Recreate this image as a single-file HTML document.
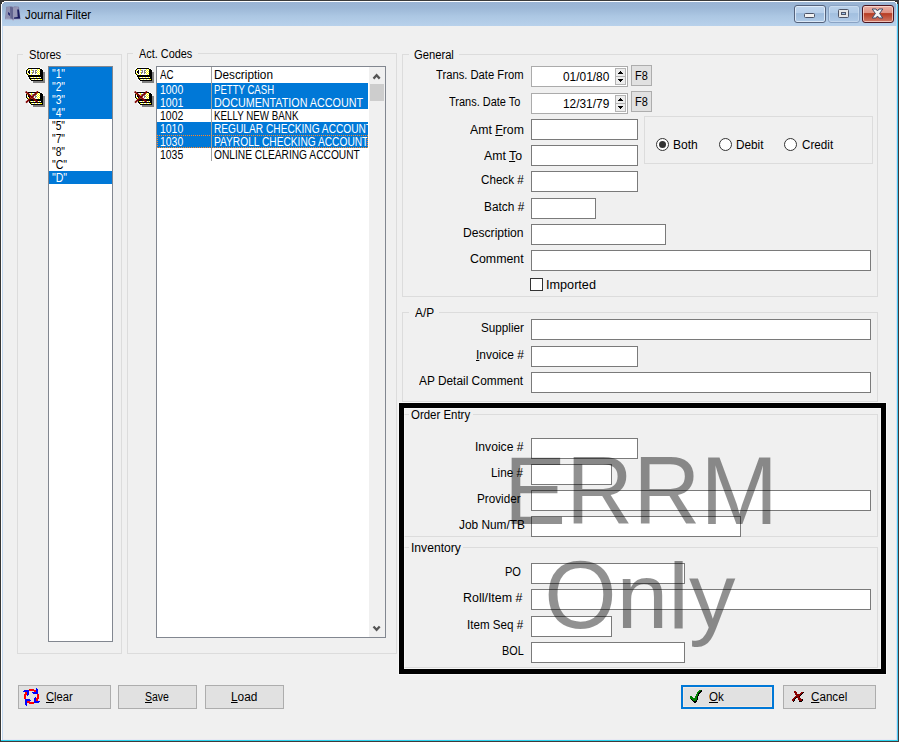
<!DOCTYPE html><html><head><meta charset="utf-8"><title>Journal Filter</title><style>
*{box-sizing:border-box;margin:0;padding:0}
html,body{width:899px;height:742px;overflow:hidden;background:#f0f0f0}
body{position:relative;font-family:"Liberation Sans",sans-serif;font-size:12px;color:#000;line-height:14px}
.a{position:absolute}
.t{position:absolute;white-space:nowrap;height:14px;line-height:14px;transform-origin:0 0}
.gb{position:absolute;border:1px solid #dcdcdc}
.gl{position:absolute;background:#f0f0f0;height:3px}
.in{position:absolute;background:#fff;border:1px solid #7a7a7a;height:21px}
.in2{position:absolute;background:#fff;border:1px solid #ababab;height:21px}
.btn{position:absolute;background:#e1e1e1;border:1px solid #adadad;height:24px}
.sel{position:absolute;background:#0078d7}
u{text-decoration:underline;text-underline-offset:1px}
</style></head><body>
<div class="a" style="left:0;top:0;width:899px;height:26px;background:linear-gradient(#98b2d2 0%,#9cb7d6 30%,#acc7e3 62%,#b8d1eb 100%)"></div>
<div class="a" style="left:0;top:0;width:899px;height:1px;background:#3a3a3a"></div>
<div class="a" style="left:1px;top:1px;width:896px;height:1px;background:#fdfeff"></div>
<div class="a" style="left:0;top:0;width:1px;height:742px;background:#363636"></div>
<div class="a" style="left:1px;top:2px;width:1px;height:738px;background:#ffffff"></div>
<div class="a" style="left:2px;top:26px;width:1px;height:714px;background:#c3d8ef"></div>
<div class="a" style="left:896px;top:26px;width:1px;height:714px;background:#d6e0f4"></div>
<div class="a" style="left:896px;top:2px;width:1px;height:24px;background:#c3dcf4"></div>
<div class="a" style="left:897px;top:2px;width:1px;height:739px;background:#4ccbf3"></div>
<div class="a" style="left:898px;top:0;width:1px;height:742px;background:#3d3a3c"></div>
<div class="a" style="left:3px;top:739px;width:893px;height:1px;background:#e9e9f2"></div>
<div class="a" style="left:1px;top:740px;width:897px;height:1px;background:#2cd3ee"></div>
<div class="a" style="left:0;top:741px;width:899px;height:1px;background:#403a3a"></div>
<div class="a" style="left:1px;top:1px;width:1px;height:1px;background:#343434"></div><div class="a" style="left:2px;top:1px;width:1px;height:1px;background:#343434"></div><div class="a" style="left:3px;top:1px;width:1px;height:1px;background:#343434"></div><div class="a" style="left:1px;top:2px;width:1px;height:1px;background:#343434"></div><div class="a" style="left:2px;top:2px;width:1px;height:1px;background:#ffffff"></div><div class="a" style="left:3px;top:2px;width:1px;height:1px;background:#ffffff"></div><div class="a" style="left:1px;top:3px;width:1px;height:1px;background:#343434"></div><div class="a" style="left:2px;top:3px;width:1px;height:1px;background:#ffffff"></div>
<div class="a" style="left:895px;top:1px;width:1px;height:1px;background:#343434"></div><div class="a" style="left:896px;top:1px;width:1px;height:1px;background:#343434"></div><div class="a" style="left:897px;top:1px;width:1px;height:1px;background:#343434"></div><div class="a" style="left:895px;top:2px;width:1px;height:1px;background:#ffffff"></div><div class="a" style="left:896px;top:2px;width:1px;height:1px;background:#ffffff"></div><div class="a" style="left:897px;top:2px;width:1px;height:1px;background:#343434"></div><div class="a" style="left:896px;top:3px;width:1px;height:1px;background:#ffffff"></div><div class="a" style="left:897px;top:3px;width:1px;height:1px;background:#343434"></div>
<svg class="a" style="left:5px;top:6px" width="16" height="15" viewBox="0 0 16 15">
<path d="M1.2 0.8 L7 0.2 L8 1 L9.5 0.2 L14 0.8 L15.6 13.2 L9.2 13.4 L8.2 14.8 L6.8 13.4 L0 13.2 Z" fill="#8183a8"/>
<path d="M1.6 1.2 L5 0.8 L5.5 12.8 L0.6 12.8 Z" fill="#8f91b1"/>
<path d="M5 0.8 L8 1.4 L8 13.6 L5.5 12.8 Z" fill="#62648f"/>
<path d="M8 1.4 L13.2 1 L12 10.5 L8 12.5 Z" fill="#9697b6"/>
<path d="M3 6 L4.8 7.2 L5 10 L3.2 8.4 Z" fill="#1f2168"/>
<path d="M12.2 3.6 L13.9 3.4 L15.2 12.9 L9.2 13 L9 11.4 L12.8 11 Z" fill="#1b1d60"/>
<path d="M0.5 13 L7 13.2 L8.2 14.6 L9.2 13.2 L15.4 13" fill="none" stroke="#c9cbe0" stroke-width="0.6"/>
</svg>
<div class="t" style="left:25.36px;top:8px;color:#000;transform:scaleX(0.9539);">Journal Filter</div>
<div class="a" style="left:794px;top:5px;width:32px;height:18px;border:1px solid #54627c;border-radius:3px;background:linear-gradient(#c0d5ee 0%,#b7cfea 46%,#9cbadb 47%,#b0cbe8 100%);box-shadow:inset 0 0 0 1px rgba(235,243,252,.75)"></div>
<div class="a" style="left:828px;top:5px;width:32px;height:18px;border:1px solid #8aa3c4;border-radius:3px;background:linear-gradient(#b9d0ea 0%,#b1cbe7 46%,#a2bfdf 47%,#b0cae7 100%);box-shadow:inset 0 0 0 1px rgba(220,232,246,.5)"></div>
<div class="a" style="left:862px;top:5px;width:32px;height:18px;border:1px solid #4a1521;border-radius:3px;background:linear-gradient(#eab0a6 0%,#dd8f80 46%,#b63b22 47%,#d07a68 100%);box-shadow:inset 0 0 0 1px rgba(255,225,215,.7)"></div>
<div class="a" style="left:804px;top:13px;width:11px;height:5px;background:#f2f2f2;border:1px solid #4a5266;border-radius:1.5px"></div>
<div class="a" style="left:838px;top:9px;width:11px;height:9px;background:#e6e6e6;border:1px solid #4f5567;border-radius:1.5px"></div>
<div class="a" style="left:841px;top:12px;width:5px;height:3px;background:#9fc0e6;border:1px solid #4f5567"></div>
<svg class="a" style="left:871px;top:8px" width="13" height="11" viewBox="0 0 13 11">
<path d="M1.2 1 L5 1 L6.5 3 L8 1 L11.8 1 L8.6 5.5 L11.8 10 L8 10 L6.5 8 L5 10 L1.2 10 L4.4 5.5 Z" fill="#f4f4f4" stroke="#434c66" stroke-width="1" stroke-linejoin="round"/>
</svg>
<div class="gb" style="left:17px;top:54px;width:105px;height:600px"></div>
<div class="gl" style="left:23.3px;top:53px;width:42.9px"></div>
<div class="t" style="left:28.72px;top:48px;color:#000;transform:scaleX(0.9279);">Stores</div>
<div class="gb" style="left:127px;top:53px;width:270px;height:601px"></div>
<div class="gl" style="left:133.3px;top:52px;width:64.6px"></div>
<div class="t" style="left:139.30px;top:47px;color:#000;transform:scaleX(0.9082);">Act. Codes</div>
<div class="gb" style="left:402px;top:54px;width:476px;height:243px"></div>
<div class="gl" style="left:409.0px;top:53px;width:50.2px"></div>
<div class="t" style="left:414.42px;top:48px;color:#000;transform:scaleX(0.9333);">General</div>
<div class="gb" style="left:402px;top:312px;width:476px;height:90px"></div>
<div class="gl" style="left:408.7px;top:311px;width:30.2px"></div>
<div class="t" style="left:414.70px;top:306px;color:#000;transform:scaleX(0.9867);">A/P</div>
<div class="gb" style="left:402px;top:414px;width:476px;height:123px"></div>
<div class="gl" style="left:408.6px;top:413px;width:64.3px"></div>
<div class="t" style="left:411.30px;top:408px;color:#000;transform:scaleX(0.9532);">Order Entry</div>
<div class="gb" style="left:402px;top:547px;width:476px;height:121px"></div>
<div class="gl" style="left:408.6px;top:546px;width:54.2px"></div>
<div class="t" style="left:410.76px;top:541px;color:#000;transform:scaleX(1.0114);">Inventory</div>
<div class="a" style="left:48px;top:66px;width:65px;height:576px;background:#fff;border:1px solid #828790"></div>
<div class="sel" style="left:49px;top:67px;width:63px;height:13px"></div>
<div class="t" style="left:51.77px;top:67px;color:#fff;transform:scaleX(0.8561);">&quot;1&quot;</div>
<div class="sel" style="left:49px;top:80px;width:63px;height:13px"></div>
<div class="t" style="left:51.77px;top:80px;color:#fff;transform:scaleX(0.8561);">&quot;2&quot;</div>
<div class="sel" style="left:49px;top:93px;width:63px;height:13px"></div>
<div class="t" style="left:51.77px;top:93px;color:#fff;transform:scaleX(0.8561);">&quot;3&quot;</div>
<div class="sel" style="left:49px;top:106px;width:63px;height:13px"></div>
<div class="t" style="left:51.77px;top:106px;color:#fff;transform:scaleX(0.8561);">&quot;4&quot;</div>
<div class="t" style="left:51.77px;top:119px;color:#000;transform:scaleX(0.8561);">&quot;5&quot;</div>
<div class="t" style="left:51.77px;top:132px;color:#000;transform:scaleX(0.8561);">&quot;7&quot;</div>
<div class="t" style="left:51.77px;top:145px;color:#000;transform:scaleX(0.8561);">&quot;8&quot;</div>
<div class="t" style="left:51.76px;top:158px;color:#000;transform:scaleX(0.8800);">&quot;C&quot;</div>
<div class="sel" style="left:49px;top:171px;width:63px;height:13px"></div>
<div class="t" style="left:51.76px;top:171px;color:#fff;transform:scaleX(0.8800);">&quot;D&quot;</div>
<div class="a" style="left:156px;top:66px;width:230px;height:572px;background:#fff;border:1px solid #828790"></div>
<div class="a" style="left:369px;top:67px;width:16px;height:570px;background:#f0f0f0"></div>
<div class="a" style="left:370px;top:84px;width:14px;height:17px;background:#cdcdcd"></div>
<svg class="a" style="left:371px;top:72px" width="12" height="9" viewBox="0 0 12 9"><path d="M2.5 6.6 L5.6 3.3 L8.7 6.6" fill="none" stroke="#555" stroke-width="2.3"/></svg>
<svg class="a" style="left:371px;top:624px" width="12" height="9" viewBox="0 0 12 9"><path d="M2.5 2.5 L5.6 5.8 L8.7 2.5" fill="none" stroke="#555" stroke-width="2.3"/></svg>
<div class="t" style="left:159.50px;top:68px;color:#000;transform:scaleX(0.8124);">AC</div>
<div class="t" style="left:214.02px;top:68px;color:#000;transform:scaleX(0.9820);">Description</div>
<div class="sel" style="left:157px;top:83px;width:211px;height:13px"></div>
<div class="t" style="left:159.84px;top:83px;color:#fff;transform:scaleX(0.8709);">1000</div>
<div class="t" style="left:214.20px;top:83px;color:#fff;transform:scaleX(0.8000);">PETTY CASH</div>
<div class="sel" style="left:157px;top:96px;width:211px;height:13px"></div>
<div class="t" style="left:159.83px;top:96px;color:#fff;transform:scaleX(0.8752);">1001</div>
<div class="t" style="left:214.10px;top:96px;color:#fff;transform:scaleX(0.8964);">DOCUMENTATION ACCOUNT</div>
<div class="t" style="left:159.83px;top:109px;color:#000;transform:scaleX(0.8752);">1002</div>
<div class="t" style="left:214.19px;top:109px;color:#000;transform:scaleX(0.8147);">KELLY NEW BANK</div>
<div class="sel" style="left:157px;top:122px;width:211px;height:13px"></div>
<div class="t" style="left:159.84px;top:122px;color:#fff;transform:scaleX(0.8709);">1010</div>
<div class="t" style="left:214.15px;top:122px;color:#fff;transform:scaleX(0.8469);width:181.83px;overflow:hidden;">REGULAR CHECKING ACCOUNT</div>
<div class="sel" style="left:157px;top:135px;width:211px;height:13px"></div>
<div class="t" style="left:159.84px;top:135px;color:#fff;transform:scaleX(0.8709);">1030</div>
<div class="t" style="left:214.15px;top:135px;color:#fff;transform:scaleX(0.8488);width:181.44px;overflow:hidden;">PAYROLL CHECKING ACCOUNT</div>
<div class="t" style="left:159.84px;top:148px;color:#000;transform:scaleX(0.8709);">1035</div>
<div class="t" style="left:214.47px;top:148px;color:#000;transform:scaleX(0.8510);">ONLINE CLEARING ACCOUNT</div>
<div class="a" style="left:211px;top:67px;width:1px;height:94px;background:#a0a0a0"></div>
<div class="a" style="left:157px;top:135px;width:211px;height:13px;border:1px dotted #ff8728"></div>
<svg class="a" style="left:25px;top:67px" width="20" height="16" viewBox="0 0 20 16" shape-rendering="crispEdges"><path fill="#fbfbfb" d="M2 0h14v1h-14zM1 1h2v1h-2zM15 1h2v1h-2zM0 2h2v1h-2zM17 2h1v1h-1zM0 3h1v1h-1zM18 3h1v1h-1zM0 4h1v1h-1zM0 5h1v1h-1zM0 6h1v1h-1zM0 7h2v1h-2zM1 8h2v1h-2zM2 9h1v1h-1zM2 10h2v1h-2zM3 11h1v1h-1zM3 12h2v1h-2zM4 13h2v1h-2z"/><path fill="#000" d="M3 1h12v1h-12zM2 2h1v1h-1zM15 2h2v1h-2zM1 3h1v1h-1zM4 3h1v1h-1zM15 3h3v1h-3zM1 4h1v1h-1zM3 4h2v1h-2zM15 4h3v1h-3zM1 5h1v1h-1zM3 5h2v1h-2zM15 5h3v1h-3zM1 6h1v1h-1zM4 6h1v1h-1zM15 6h3v1h-3zM2 7h1v1h-1zM15 7h3v1h-3zM3 8h15v1h-15zM3 9h15v1h-15zM4 10h1v1h-1zM16 10h2v1h-2zM4 11h14v1h-14zM5 12h1v1h-1zM17 12h1v1h-1zM6 13h12v1h-12z"/><path fill="#ffff00" d="M3 2h1v1h-1zM6 2h1v1h-1zM12 2h1v1h-1zM14 2h1v1h-1zM2 3h1v1h-1zM6 3h1v1h-1zM13 3h1v1h-1zM12 4h1v1h-1zM14 4h1v1h-1zM6 5h1v1h-1zM13 5h1v1h-1zM2 6h1v1h-1zM12 6h1v1h-1zM14 6h1v1h-1zM3 7h1v1h-1zM6 7h1v1h-1zM13 7h1v1h-1zM5 10h1v1h-1zM8 10h1v1h-1zM11 10h1v1h-1zM14 10h1v1h-1zM6 12h1v1h-1zM9 12h1v1h-1zM12 12h1v1h-1zM15 12h2v1h-2z"/><path fill="#fff" d="M4 2h2v1h-2zM7 2h5v1h-5zM13 2h1v1h-1zM3 3h1v1h-1zM5 3h1v1h-1zM9 3h1v1h-1zM12 3h1v1h-1zM14 3h1v1h-1zM2 4h1v1h-1zM5 4h3v1h-3zM9 4h1v1h-1zM11 4h1v1h-1zM13 4h1v1h-1zM2 5h1v1h-1zM5 5h1v1h-1zM9 5h1v1h-1zM12 5h1v1h-1zM14 5h1v1h-1zM3 6h1v1h-1zM5 6h2v1h-2zM8 6h2v1h-2zM11 6h1v1h-1zM13 6h1v1h-1zM4 7h2v1h-2zM7 7h6v1h-6zM14 7h1v1h-1zM6 10h2v1h-2zM9 10h2v1h-2zM12 10h2v1h-2zM15 10h1v1h-1zM7 12h2v1h-2zM10 12h2v1h-2zM13 12h2v1h-2z"/><path fill="#808080" d="M7 3h2v1h-2zM10 3h2v1h-2zM8 4h1v1h-1zM10 4h1v1h-1zM7 5h2v1h-2zM10 5h2v1h-2zM18 5h2v1h-2zM7 6h1v1h-1zM10 6h1v1h-1zM18 6h2v1h-2zM18 7h2v1h-2zM18 8h2v1h-2zM18 9h2v1h-2zM18 10h2v1h-2zM18 11h2v1h-2zM18 12h2v1h-2zM18 13h2v1h-2zM8 14h12v1h-12zM8 15h12v1h-12z"/></svg>
<svg class="a" style="left:25px;top:91px" width="20" height="16" viewBox="0 0 20 16" shape-rendering="crispEdges"><path fill="#fbfbfb" d="M2 0h14v1h-14zM1 1h2v1h-2zM15 1h2v1h-2zM0 2h2v1h-2zM17 2h1v1h-1zM0 3h1v1h-1zM18 3h1v1h-1zM0 4h1v1h-1zM0 5h1v1h-1zM0 6h1v1h-1zM0 7h2v1h-2zM1 8h2v1h-2zM2 9h1v1h-1zM2 10h2v1h-2zM3 11h1v1h-1zM3 12h2v1h-2zM4 13h2v1h-2z"/><path fill="#000" d="M3 1h12v1h-12zM2 2h1v1h-1zM15 2h2v1h-2zM1 3h1v1h-1zM4 3h1v1h-1zM15 3h3v1h-3zM1 4h1v1h-1zM3 4h2v1h-2zM15 4h3v1h-3zM1 5h1v1h-1zM3 5h2v1h-2zM15 5h3v1h-3zM1 6h1v1h-1zM4 6h1v1h-1zM15 6h3v1h-3zM2 7h1v1h-1zM15 7h3v1h-3zM3 8h15v1h-15zM3 9h15v1h-15zM4 10h1v1h-1zM16 10h2v1h-2zM4 11h14v1h-14zM5 12h1v1h-1zM17 12h1v1h-1zM6 13h12v1h-12z"/><path fill="#ffff00" d="M3 2h1v1h-1zM6 2h1v1h-1zM12 2h1v1h-1zM14 2h1v1h-1zM2 3h1v1h-1zM6 3h1v1h-1zM13 3h1v1h-1zM12 4h1v1h-1zM14 4h1v1h-1zM6 5h1v1h-1zM13 5h1v1h-1zM2 6h1v1h-1zM12 6h1v1h-1zM14 6h1v1h-1zM3 7h1v1h-1zM6 7h1v1h-1zM13 7h1v1h-1zM5 10h1v1h-1zM8 10h1v1h-1zM11 10h1v1h-1zM14 10h1v1h-1zM6 12h1v1h-1zM9 12h1v1h-1zM12 12h1v1h-1zM15 12h2v1h-2z"/><path fill="#fff" d="M4 2h2v1h-2zM7 2h5v1h-5zM13 2h1v1h-1zM3 3h1v1h-1zM5 3h1v1h-1zM9 3h1v1h-1zM12 3h1v1h-1zM14 3h1v1h-1zM2 4h1v1h-1zM5 4h3v1h-3zM9 4h1v1h-1zM11 4h1v1h-1zM13 4h1v1h-1zM2 5h1v1h-1zM5 5h1v1h-1zM9 5h1v1h-1zM12 5h1v1h-1zM14 5h1v1h-1zM3 6h1v1h-1zM5 6h2v1h-2zM8 6h2v1h-2zM11 6h1v1h-1zM13 6h1v1h-1zM4 7h2v1h-2zM7 7h6v1h-6zM14 7h1v1h-1zM6 10h2v1h-2zM9 10h2v1h-2zM12 10h2v1h-2zM15 10h1v1h-1zM7 12h2v1h-2zM10 12h2v1h-2zM13 12h2v1h-2z"/><path fill="#808080" d="M7 3h2v1h-2zM10 3h2v1h-2zM8 4h1v1h-1zM10 4h1v1h-1zM7 5h2v1h-2zM10 5h2v1h-2zM18 5h2v1h-2zM7 6h1v1h-1zM10 6h1v1h-1zM18 6h2v1h-2zM18 7h2v1h-2zM18 8h2v1h-2zM18 9h2v1h-2zM18 10h2v1h-2zM18 11h2v1h-2zM18 12h2v1h-2zM18 13h2v1h-2zM8 14h12v1h-12zM8 15h12v1h-12z"/><path d="M0.6 0.6 L12.4 11 M13 0.4 L1 11.6" stroke="#800000" stroke-width="1.8" fill="none" shape-rendering="geometricPrecision"/></svg>
<svg class="a" style="left:134px;top:67px" width="20" height="16" viewBox="0 0 20 16" shape-rendering="crispEdges"><path fill="#fbfbfb" d="M2 0h14v1h-14zM1 1h2v1h-2zM15 1h2v1h-2zM0 2h2v1h-2zM17 2h1v1h-1zM0 3h1v1h-1zM18 3h1v1h-1zM0 4h1v1h-1zM0 5h1v1h-1zM0 6h1v1h-1zM0 7h2v1h-2zM1 8h2v1h-2zM2 9h1v1h-1zM2 10h2v1h-2zM3 11h1v1h-1zM3 12h2v1h-2zM4 13h2v1h-2z"/><path fill="#000" d="M3 1h12v1h-12zM2 2h1v1h-1zM15 2h2v1h-2zM1 3h1v1h-1zM4 3h1v1h-1zM15 3h3v1h-3zM1 4h1v1h-1zM3 4h2v1h-2zM15 4h3v1h-3zM1 5h1v1h-1zM3 5h2v1h-2zM15 5h3v1h-3zM1 6h1v1h-1zM4 6h1v1h-1zM15 6h3v1h-3zM2 7h1v1h-1zM15 7h3v1h-3zM3 8h15v1h-15zM3 9h15v1h-15zM4 10h1v1h-1zM16 10h2v1h-2zM4 11h14v1h-14zM5 12h1v1h-1zM17 12h1v1h-1zM6 13h12v1h-12z"/><path fill="#ffff00" d="M3 2h1v1h-1zM6 2h1v1h-1zM12 2h1v1h-1zM14 2h1v1h-1zM2 3h1v1h-1zM6 3h1v1h-1zM13 3h1v1h-1zM12 4h1v1h-1zM14 4h1v1h-1zM6 5h1v1h-1zM13 5h1v1h-1zM2 6h1v1h-1zM12 6h1v1h-1zM14 6h1v1h-1zM3 7h1v1h-1zM6 7h1v1h-1zM13 7h1v1h-1zM5 10h1v1h-1zM8 10h1v1h-1zM11 10h1v1h-1zM14 10h1v1h-1zM6 12h1v1h-1zM9 12h1v1h-1zM12 12h1v1h-1zM15 12h2v1h-2z"/><path fill="#fff" d="M4 2h2v1h-2zM7 2h5v1h-5zM13 2h1v1h-1zM3 3h1v1h-1zM5 3h1v1h-1zM9 3h1v1h-1zM12 3h1v1h-1zM14 3h1v1h-1zM2 4h1v1h-1zM5 4h3v1h-3zM9 4h1v1h-1zM11 4h1v1h-1zM13 4h1v1h-1zM2 5h1v1h-1zM5 5h1v1h-1zM9 5h1v1h-1zM12 5h1v1h-1zM14 5h1v1h-1zM3 6h1v1h-1zM5 6h2v1h-2zM8 6h2v1h-2zM11 6h1v1h-1zM13 6h1v1h-1zM4 7h2v1h-2zM7 7h6v1h-6zM14 7h1v1h-1zM6 10h2v1h-2zM9 10h2v1h-2zM12 10h2v1h-2zM15 10h1v1h-1zM7 12h2v1h-2zM10 12h2v1h-2zM13 12h2v1h-2z"/><path fill="#808080" d="M7 3h2v1h-2zM10 3h2v1h-2zM8 4h1v1h-1zM10 4h1v1h-1zM7 5h2v1h-2zM10 5h2v1h-2zM18 5h2v1h-2zM7 6h1v1h-1zM10 6h1v1h-1zM18 6h2v1h-2zM18 7h2v1h-2zM18 8h2v1h-2zM18 9h2v1h-2zM18 10h2v1h-2zM18 11h2v1h-2zM18 12h2v1h-2zM18 13h2v1h-2zM8 14h12v1h-12zM8 15h12v1h-12z"/></svg>
<svg class="a" style="left:134px;top:91px" width="20" height="16" viewBox="0 0 20 16" shape-rendering="crispEdges"><path fill="#fbfbfb" d="M2 0h14v1h-14zM1 1h2v1h-2zM15 1h2v1h-2zM0 2h2v1h-2zM17 2h1v1h-1zM0 3h1v1h-1zM18 3h1v1h-1zM0 4h1v1h-1zM0 5h1v1h-1zM0 6h1v1h-1zM0 7h2v1h-2zM1 8h2v1h-2zM2 9h1v1h-1zM2 10h2v1h-2zM3 11h1v1h-1zM3 12h2v1h-2zM4 13h2v1h-2z"/><path fill="#000" d="M3 1h12v1h-12zM2 2h1v1h-1zM15 2h2v1h-2zM1 3h1v1h-1zM4 3h1v1h-1zM15 3h3v1h-3zM1 4h1v1h-1zM3 4h2v1h-2zM15 4h3v1h-3zM1 5h1v1h-1zM3 5h2v1h-2zM15 5h3v1h-3zM1 6h1v1h-1zM4 6h1v1h-1zM15 6h3v1h-3zM2 7h1v1h-1zM15 7h3v1h-3zM3 8h15v1h-15zM3 9h15v1h-15zM4 10h1v1h-1zM16 10h2v1h-2zM4 11h14v1h-14zM5 12h1v1h-1zM17 12h1v1h-1zM6 13h12v1h-12z"/><path fill="#ffff00" d="M3 2h1v1h-1zM6 2h1v1h-1zM12 2h1v1h-1zM14 2h1v1h-1zM2 3h1v1h-1zM6 3h1v1h-1zM13 3h1v1h-1zM12 4h1v1h-1zM14 4h1v1h-1zM6 5h1v1h-1zM13 5h1v1h-1zM2 6h1v1h-1zM12 6h1v1h-1zM14 6h1v1h-1zM3 7h1v1h-1zM6 7h1v1h-1zM13 7h1v1h-1zM5 10h1v1h-1zM8 10h1v1h-1zM11 10h1v1h-1zM14 10h1v1h-1zM6 12h1v1h-1zM9 12h1v1h-1zM12 12h1v1h-1zM15 12h2v1h-2z"/><path fill="#fff" d="M4 2h2v1h-2zM7 2h5v1h-5zM13 2h1v1h-1zM3 3h1v1h-1zM5 3h1v1h-1zM9 3h1v1h-1zM12 3h1v1h-1zM14 3h1v1h-1zM2 4h1v1h-1zM5 4h3v1h-3zM9 4h1v1h-1zM11 4h1v1h-1zM13 4h1v1h-1zM2 5h1v1h-1zM5 5h1v1h-1zM9 5h1v1h-1zM12 5h1v1h-1zM14 5h1v1h-1zM3 6h1v1h-1zM5 6h2v1h-2zM8 6h2v1h-2zM11 6h1v1h-1zM13 6h1v1h-1zM4 7h2v1h-2zM7 7h6v1h-6zM14 7h1v1h-1zM6 10h2v1h-2zM9 10h2v1h-2zM12 10h2v1h-2zM15 10h1v1h-1zM7 12h2v1h-2zM10 12h2v1h-2zM13 12h2v1h-2z"/><path fill="#808080" d="M7 3h2v1h-2zM10 3h2v1h-2zM8 4h1v1h-1zM10 4h1v1h-1zM7 5h2v1h-2zM10 5h2v1h-2zM18 5h2v1h-2zM7 6h1v1h-1zM10 6h1v1h-1zM18 6h2v1h-2zM18 7h2v1h-2zM18 8h2v1h-2zM18 9h2v1h-2zM18 10h2v1h-2zM18 11h2v1h-2zM18 12h2v1h-2zM18 13h2v1h-2zM8 14h12v1h-12zM8 15h12v1h-12z"/><path d="M0.6 0.6 L12.4 11 M13 0.4 L1 11.6" stroke="#800000" stroke-width="1.8" fill="none" shape-rendering="geometricPrecision"/></svg>
<div class="t" style="left:435.67px;top:68px;color:#000;transform:scaleX(0.9351);">Trans. Date From</div>
<div class="t" style="left:449.37px;top:95px;color:#000;transform:scaleX(0.9139);">Trans. Date To</div>
<div class="t" style="left:470.30px;top:123px;color:#000;transform:scaleX(1.0236);">Amt <u>F</u>rom</div>
<div class="t" style="left:484.40px;top:149px;color:#000;transform:scaleX(1.0239);">Amt <u>T</u>o</div>
<div class="t" style="left:481.19px;top:173px;color:#000;transform:scaleX(0.9706);">Check #</div>
<div class="t" style="left:483.71px;top:200px;color:#000;transform:scaleX(0.9893);">Batch #</div>
<div class="t" style="left:462.59px;top:226px;color:#000;transform:scaleX(1.0094);">Description</div>
<div class="t" style="left:469.96px;top:252px;color:#000;transform:scaleX(1.0316);">Comment</div>
<div class="in2" style="left:531px;top:66px;width:97px"></div>
<div class="in2" style="left:531px;top:93px;width:97px"></div>
<div class="t" style="left:562.80px;top:70px;color:#000;transform:scaleX(0.9923);">01/01/80</div>
<div class="a" style="left:615px;top:68px;width:11px;height:9px;background:#ededed;border:1px solid #b4b4b4"></div>
<div class="a" style="left:615px;top:76px;width:11px;height:9px;background:#ededed;border:1px solid #b4b4b4"></div>
<svg class="a" style="left:618px;top:71px" width="5" height="3" viewBox="0 0 5 3" shape-rendering="crispEdges"><path fill="#000" d="M2 0h1v1h-1zM1 1h3v1h-3zM0 2h5v1h-5z"/></svg>
<svg class="a" style="left:618px;top:79px" width="5" height="3" viewBox="0 0 5 3" shape-rendering="crispEdges"><path fill="#000" d="M0 0h5v1h-5zM1 1h3v1h-3zM2 2h1v1h-1z"/></svg>
<div class="t" style="left:563.03px;top:97px;color:#000;transform:scaleX(0.9901);">12/31/79</div>
<div class="a" style="left:615px;top:95px;width:11px;height:9px;background:#ededed;border:1px solid #b4b4b4"></div>
<div class="a" style="left:615px;top:103px;width:11px;height:9px;background:#ededed;border:1px solid #b4b4b4"></div>
<svg class="a" style="left:618px;top:98px" width="5" height="3" viewBox="0 0 5 3" shape-rendering="crispEdges"><path fill="#000" d="M2 0h1v1h-1zM1 1h3v1h-3zM0 2h5v1h-5z"/></svg>
<svg class="a" style="left:618px;top:106px" width="5" height="3" viewBox="0 0 5 3" shape-rendering="crispEdges"><path fill="#000" d="M0 0h5v1h-5zM1 1h3v1h-3zM2 2h1v1h-1z"/></svg>
<div class="btn" style="left:631px;top:65px;width:21px;height:21px"></div>
<div class="t" style="left:634.89px;top:69px;color:#000;transform:scaleX(0.9120);">F8</div>
<div class="btn" style="left:631px;top:91px;width:21px;height:21px"></div>
<div class="t" style="left:634.89px;top:95px;color:#000;transform:scaleX(0.9120);">F8</div>
<div class="in" style="left:531px;top:119px;width:107px"></div>
<div class="in" style="left:531px;top:145px;width:107px"></div>
<div class="in" style="left:531px;top:171px;width:107px"></div>
<div class="in" style="left:531px;top:198px;width:65px"></div>
<div class="in" style="left:531px;top:224px;width:135px"></div>
<div class="in" style="left:531px;top:250px;width:340px"></div>
<div class="gb" style="left:644px;top:116px;width:229px;height:48px"></div>
<div class="a" style="left:656px;top:138px;width:13px;height:13px;border:1px solid #333;border-radius:50%;background:#fff"></div>
<div class="a" style="left:659px;top:141px;width:7px;height:7px;border-radius:50%;background:#333"></div>
<div class="t" style="left:673.09px;top:138px;color:#000;transform:scaleX(1.0055);">Both</div>
<div class="a" style="left:719px;top:138px;width:13px;height:13px;border:1px solid #333;border-radius:50%;background:#fff"></div>
<div class="t" style="left:736.12px;top:138px;color:#000;transform:scaleX(0.9815);">Debit</div>
<div class="a" style="left:784px;top:138px;width:13px;height:13px;border:1px solid #333;border-radius:50%;background:#fff"></div>
<div class="t" style="left:801.59px;top:138px;color:#000;transform:scaleX(0.9721);">Credit</div>
<div class="a" style="left:530px;top:278px;width:13px;height:13px;border:1px solid #333;background:#fff"></div>
<div class="t" style="left:546.11px;top:278px;color:#000;transform:scaleX(1.0549);">Imported</div>
<div class="t" style="left:480.89px;top:321px;color:#000;transform:scaleX(0.9757);">Supplier</div>
<div class="t" style="left:475.78px;top:348px;color:#000;transform:scaleX(0.9963);"><u>I</u>nvoice #</div>
<div class="t" style="left:418.60px;top:374px;color:#000;transform:scaleX(0.9893);">AP Detail Comment</div>
<div class="in" style="left:531px;top:319px;width:340px"></div>
<div class="in" style="left:531px;top:346px;width:107px"></div>
<div class="in" style="left:531px;top:372px;width:340px"></div>
<div class="t" style="left:475.46px;top:440px;color:#000;transform:scaleX(1.0091);">Invoice #</div>
<div class="t" style="left:490.72px;top:466px;color:#000;transform:scaleX(0.9771);">Line #</div>
<div class="t" style="left:476.92px;top:492px;color:#000;transform:scaleX(0.9770);">Provider</div>
<div class="t" style="left:459.25px;top:518px;color:#000;transform:scaleX(0.9886);">Job Num/TB</div>
<div class="in" style="left:531px;top:438px;width:107px"></div>
<div class="in" style="left:531px;top:464px;width:81px"></div>
<div class="in" style="left:531px;top:490px;width:340px"></div>
<div class="in" style="left:531px;top:516px;width:210px"></div>
<div class="t" style="left:504.78px;top:565px;color:#000;transform:scaleX(0.9206);">PO</div>
<div class="t" style="left:462.76px;top:591px;color:#000;transform:scaleX(1.0364);">Roll/Item #</div>
<div class="t" style="left:466.51px;top:618px;color:#000;transform:scaleX(0.9670);">Item Seq #</div>
<div class="t" style="left:501.90px;top:644px;color:#000;transform:scaleX(0.9017);">BOL</div>
<div class="in" style="left:531px;top:563px;width:154px"></div>
<div class="in" style="left:531px;top:589px;width:340px"></div>
<div class="in" style="left:531px;top:616px;width:81px"></div>
<div class="in" style="left:531px;top:642px;width:154px"></div>
<div class="a" style="left:398px;top:402px;width:489px;height:273px;border:1px solid rgba(255,255,255,.55)"></div>
<div class="a" style="left:404px;top:408px;width:477px;height:261px;border:1px solid rgba(255,255,255,.45)"></div>
<div class="a" style="left:399px;top:403px;width:487px;height:271px;border:5px solid #000"></div>
<div class="a" id="big1" style="left:504.1px;top:445.5px;font-size:93px;line-height:93px;height:93px;color:rgba(0,0,0,.43);white-space:nowrap;transform-origin:0 78.7px;transform:scaleY(1.0405)">ERRM</div>
<div class="a" id="big2" style="left:544.2px;top:549.5px;font-size:93px;line-height:93px;height:93px;color:rgba(0,0,0,.43);white-space:nowrap;transform-origin:0 78.7px"><span style="display:inline-block;transform:scaleY(1.0405);transform-origin:0 78.7px">O</span>nly</div>
<div class="btn" style="left:18px;top:685px;width:93px"></div>
<div class="t" style="left:46.12px;top:690px;color:#000;transform:scaleX(0.9327);"><u>C</u>lear</div>
<div class="btn" style="left:118px;top:685px;width:79px"></div>
<div class="t" style="left:145.25px;top:690px;color:#000;transform:scaleX(0.8724);"><u>S</u>ave</div>
<div class="btn" style="left:205px;top:685px;width:79px"></div>
<div class="t" style="left:230.91px;top:690px;color:#000;transform:scaleX(0.9889);"><u>L</u>oad</div>
<div class="btn" style="left:681px;top:685px;width:93px;border:2px solid #0078d7;box-shadow:inset 0 0 0 1px #f0e9e3"></div>
<div class="t" style="left:709.10px;top:690px;color:#000;transform:scaleX(0.9627);"><u>O</u>k</div>
<div class="btn" style="left:783px;top:685px;width:93px"></div>
<div class="t" style="left:811.09px;top:690px;color:#000;transform:scaleX(0.9700);"><u>C</u>ancel</div>
<svg class="a" style="left:23px;top:688px" width="18" height="18" viewBox="0 0 18 18" shape-rendering="crispEdges"><path fill="#0000ff" d="M13 0h1v1h-1zM13 1h2v1h-2zM1 2h5v1h-5zM13 2h2v1h-2zM0 3h6v1h-6zM13 3h2v1h-2zM4 4h2v1h-2zM9 4h6v1h-6zM4 5h2v1h-2zM10 5h5v1h-5zM4 6h2v1h-2zM4 7h1v1h-1zM12 9h1v1h-1zM11 10h2v1h-2zM2 11h5v1h-5zM11 11h2v1h-2zM2 12h6v1h-6zM11 12h2v1h-2zM2 13h2v1h-2zM11 13h6v1h-6zM2 14h2v1h-2zM11 14h5v1h-5zM2 15h2v1h-2zM2 16h2v1h-2zM3 17h1v1h-1z"/><path fill="#ff0000" d="M6 1h5v1h-5zM6 2h7v1h-7zM11 3h2v1h-2zM2 4h2v1h-2zM2 5h2v1h-2zM1 6h3v1h-3zM14 6h2v1h-2zM1 7h2v1h-2zM14 7h2v1h-2zM1 8h2v1h-2zM14 8h2v1h-2zM1 9h2v1h-2zM14 9h2v1h-2zM1 10h2v1h-2zM13 10h3v1h-3zM13 11h2v1h-2zM13 12h2v1h-2zM4 13h3v1h-3zM4 14h7v1h-7zM6 15h5v1h-5z"/></svg>
<svg class="a" style="left:690px;top:690px" width="12" height="13" viewBox="0 0 12 13" shape-rendering="crispEdges"><path fill="#008000" d="M9 0h2v1h-2zM8 1h2v1h-2zM7 2h2v1h-2zM7 3h1v1h-1zM6 4h2v1h-2zM6 5h2v1h-2zM0 6h2v1h-2zM5 6h2v1h-2zM0 7h3v1h-3zM5 7h2v1h-2zM0 8h7v1h-7zM2 9h5v1h-5zM3 10h3v1h-3z"/><path fill="#000" d="M11 0h1v1h-1zM10 1h2v1h-2zM9 2h2v1h-2zM8 3h2v1h-2zM8 4h1v1h-1zM8 5h1v1h-1zM7 6h1v1h-1zM7 7h1v1h-1zM7 8h1v1h-1zM1 9h1v1h-1zM7 9h1v1h-1zM2 10h1v1h-1zM6 10h1v1h-1zM3 11h4v1h-4zM4 12h2v1h-2z"/></svg>
<svg class="a" style="left:792px;top:691px" width="13" height="11" viewBox="0 0 13 11" shape-rendering="crispEdges"><path fill="#8a0000" d="M2 0h2v1h-2zM2 1h3v1h-3zM9 1h2v1h-2zM3 2h2v1h-2zM8 2h2v1h-2zM3 3h6v1h-6zM4 4h4v1h-4zM3 5h4v1h-4zM2 6h2v1h-2zM5 6h3v1h-3zM1 7h2v1h-2zM6 7h3v1h-3zM0 8h2v1h-2zM6 8h4v1h-4zM0 9h2v1h-2zM7 9h3v1h-3z"/><path fill="#000" d="M11 1h1v1h-1zM10 2h1v1h-1zM9 3h1v1h-1zM8 4h1v1h-1zM7 5h1v1h-1zM4 6h1v1h-1zM3 7h1v1h-1zM2 8h1v1h-1zM10 8h1v1h-1zM2 9h1v1h-1zM10 9h1v1h-1zM1 10h1v1h-1zM7 10h3v1h-3z"/></svg>
</body></html>
